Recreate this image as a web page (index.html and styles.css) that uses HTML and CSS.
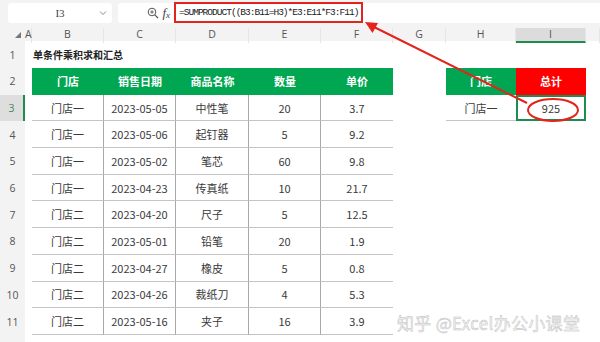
FILE: index.html
```html
<!DOCTYPE html>
<html lang="zh">
<head>
<meta charset="utf-8">
<link rel="stylesheet" href="styles.css">
</head>
<body>
<div class="app">
  <div class="fbar">
    <div class="namebox"><span class="ref">I3</span><svg class="chev" width="8" height="6" viewBox="0 0 8 6"><path d="M1 1.5 L4 4.5 L7 1.5" fill="none" stroke="#888" stroke-width="1"/></svg></div>
    <div class="field">
      <div class="fxicons">
        <svg width="12" height="12" viewBox="0 0 12 12"><circle cx="5" cy="5" r="3.8" fill="none" stroke="#555" stroke-width="1"/><path d="M3.2 5 H6.8 M5 3.2 V6.8" stroke="#555" stroke-width="0.9"/><path d="M7.8 7.8 L11 11" stroke="#555" stroke-width="1.2"/></svg>
        <span class="fx">f<sub>x</sub></span>
      </div>
      <div class="formula">=SUMPRODUCT((B3:B11=H3)*E3:E11*F3:F11)</div>
    </div>
  </div>

  <div class="sheet">
    <div class="row colhdr">
      <div class="corner"><span class="tri"></span></div>
      <div class="ch">A</div><div class="ch">B</div><div class="ch">C</div><div class="ch">D</div><div class="ch">E</div><div class="ch">F</div><div class="ch">G</div><div class="ch">H</div><div class="ch sel">I</div><div class="ch"></div>
    </div>
    <div class="row r1">
      <div class="rn">1</div><div></div><div class="title">单条件乘积求和汇总</div><div></div><div></div><div></div><div></div><div></div><div></div><div></div><div></div>
    </div>
    <div class="row">
      <div class="rn">2</div><div></div>
      <div class="hd">门店</div><div class="hd">销售日期</div><div class="hd">商品名称</div><div class="hd">数量</div><div class="hd">单价</div>
      <div></div><div class="hd">门店</div><div class="hd red">总计</div><div></div>
    </div>
    <div class="row">
      <div class="rn rsel">3</div><div></div>
      <div class="c v">门店一</div><div class="c v">2023-05-05</div><div class="c v">中性笔</div><div class="c v">20</div><div class="c">3.7</div>
      <div></div><div class="c">门店一</div><div class="c selcell">925</div><div></div>
    </div>
    <div class="row">
      <div class="rn">4</div><div></div>
      <div class="c v">门店一</div><div class="c v">2023-05-06</div><div class="c v">起钉器</div><div class="c v">5</div><div class="c">9.2</div>
      <div></div><div></div><div></div><div></div>
    </div>
    <div class="row">
      <div class="rn">5</div><div></div>
      <div class="c v">门店一</div><div class="c v">2023-05-02</div><div class="c v">笔芯</div><div class="c v">60</div><div class="c">9.8</div>
      <div></div><div></div><div></div><div></div>
    </div>
    <div class="row">
      <div class="rn">6</div><div></div>
      <div class="c v">门店一</div><div class="c v">2023-04-23</div><div class="c v">传真纸</div><div class="c v">10</div><div class="c">21.7</div>
      <div></div><div></div><div></div><div></div>
    </div>
    <div class="row">
      <div class="rn">7</div><div></div>
      <div class="c v">门店二</div><div class="c v">2023-04-20</div><div class="c v">尺子</div><div class="c v">5</div><div class="c">12.5</div>
      <div></div><div></div><div></div><div></div>
    </div>
    <div class="row">
      <div class="rn">8</div><div></div>
      <div class="c v">门店二</div><div class="c v">2023-05-01</div><div class="c v">铅笔</div><div class="c v">20</div><div class="c">1.9</div>
      <div></div><div></div><div></div><div></div>
    </div>
    <div class="row">
      <div class="rn">9</div><div></div>
      <div class="c v">门店二</div><div class="c v">2023-04-27</div><div class="c v">橡皮</div><div class="c v">5</div><div class="c">0.8</div>
      <div></div><div></div><div></div><div></div>
    </div>
    <div class="row">
      <div class="rn">10</div><div></div>
      <div class="c v">门店二</div><div class="c v">2023-04-26</div><div class="c v">裁纸刀</div><div class="c v">4</div><div class="c">5.3</div>
      <div></div><div></div><div></div><div></div>
    </div>
    <div class="row">
      <div class="rn">11</div><div></div>
      <div class="c v">门店二</div><div class="c v">2023-05-16</div><div class="c v">夹子</div><div class="c v">16</div><div class="c">3.9</div>
      <div></div><div></div><div></div><div></div>
    </div>
    <div class="row last">
      <div class="rn"></div><div></div><div></div><div></div><div></div><div></div><div></div><div></div><div></div><div></div><div></div>
    </div>
  </div>

  <svg class="overlay" width="600" height="342" viewBox="0 0 600 342">
    <line x1="374" y1="27" x2="527" y2="103" stroke="#e3231c" stroke-width="2"/>
    <polygon points="365,22 372.5,33 378,23" fill="#e3231c"/>
    <ellipse cx="553" cy="110" rx="25" ry="11" fill="none" stroke="#e3231c" stroke-width="2"/>
  </svg>

  <div class="watermark">知乎 @Excel办公小课堂</div>
</div>
</body>
</html>
```

FILE: styles.css
```css
html, body {
  margin: 0;
  padding: 0;
  background: #ffffff;
}
.app {
  position: relative;
  width: 600px;
  height: 342px;
  overflow: hidden;
  font-family: "Noto Sans CJK SC", "Noto Sans", sans-serif;
  color: #3a3a3a;
}
.fbar {
  height: 28px;
  box-sizing: border-box;
  background: #f3f3f3;
  display: flex;
  align-items: flex-start;
  padding: 3px 0 0 8px;
  gap: 6px;
}
.namebox {
  width: 104px;
  height: 20px;
  background: #fff;
  border-radius: 3px;
  display: flex;
  align-items: center;
  justify-content: center;
  position: relative;
}
.ref {
  font-family: "Liberation Serif", serif;
  font-size: 11px;
  color: #444;
}
.chev {
  position: absolute;
  right: 5px;
  top: 7px;
}
.field {
  flex: 1;
  height: 20px;
  background: #fff;
  border-radius: 3px 0 0 3px;
  display: flex;
  align-items: center;
}
.fxicons {
  width: 56px;
  display: flex;
  align-items: center;
  justify-content: flex-end;
  gap: 3px;
  padding-right: 4px;
  box-sizing: border-box;
}
.fx {
  font-family: "Liberation Serif", serif;
  font-style: italic;
  font-size: 13px;
  color: #444;
  line-height: 1;
}
.fx sub {
  font-size: 9px;
  vertical-align: -1px;
}
.formula {
  height: 21px;
  box-sizing: border-box;
  border: 2px solid #e3231c;
  margin-top: -1px;
  padding: 0 0 0 3px;
  width: 189px;
  font-family: "Liberation Mono", monospace;
  font-size: 9.5px;
  letter-spacing: -0.98px;
  line-height: 17px;
  color: #222;
  white-space: nowrap;
  overflow: hidden;
}
.sheet {
  display: flex;
  flex-direction: column;
}
.row {
  display: grid;
  grid-template-columns: 25px 7px 72px 72px 73px 72px 72px 53px 70px 70px 1fr;
  height: 26.7px;
}
.colhdr {
  height: 13px;
  background: #f3f3f3;
}
.r1 {
  height: 27px;
}
.last {
  height: 8px;
}
.corner {
  position: relative;
}
.tri {
  position: absolute;
  left: 15px;
  top: 4px;
  width: 0;
  height: 0;
  border-left: 6px solid transparent;
  border-bottom: 6px solid #777;
}
.ch {
  font-family: "Open Sans", sans-serif;
  font-size: 10.5px;
  color: #555;
  text-align: center;
  line-height: 13px;
  border-right: 1px solid #e6e6e6;
}
.ch.sel {
  background: #dcdcdc;
  border-bottom: 2px solid #1e8c4e;
  box-sizing: border-box;
}
.rn {
  background: #f3f3f3;
  font-family: "Open Sans", sans-serif;
  font-size: 10.5px;
  color: #555;
  display: flex;
  align-items: center;
  justify-content: center;
}
.rsel {
  background: #dedede;
  color: #4a8a63;
  box-sizing: border-box;
  border-right: 2px solid #1e8c4e;
}
.title {
  grid-column: span 3;
  font-size: 10px;
  font-weight: bold;
  color: #222;
  display: flex;
  align-items: center;
  padding-left: 1px;
  white-space: nowrap;
}
.title + div, .title + div + div {
  display: none;
}
.hd {
  background: #00a651;
  color: #fff;
  font-weight: bold;
  font-size: 11px;
  display: flex;
  align-items: center;
  justify-content: center;
}
.hd.red {
  background: #ff0000;
}
.c {
  font-size: 11px;
  color: #3a3a3a;
  display: flex;
  align-items: center;
  justify-content: center;
  box-sizing: border-box;
  border-bottom: 1px solid #c4c4c4;
}
.c.v {
  border-right: 1px solid #a8a8a8;
}
.selcell {
  border: 2px solid #1e8c4e;
}
.overlay {
  position: absolute;
  left: 0;
  top: 0;
  pointer-events: none;
}
.watermark {
  position: absolute;
  left: 397px;
  top: 310px;
  font-size: 17px;
  color: #f5f5f5;
  -webkit-text-stroke: 0.45px #bcbcbc;
  letter-spacing: 0.3px;
  white-space: nowrap;
}
```
